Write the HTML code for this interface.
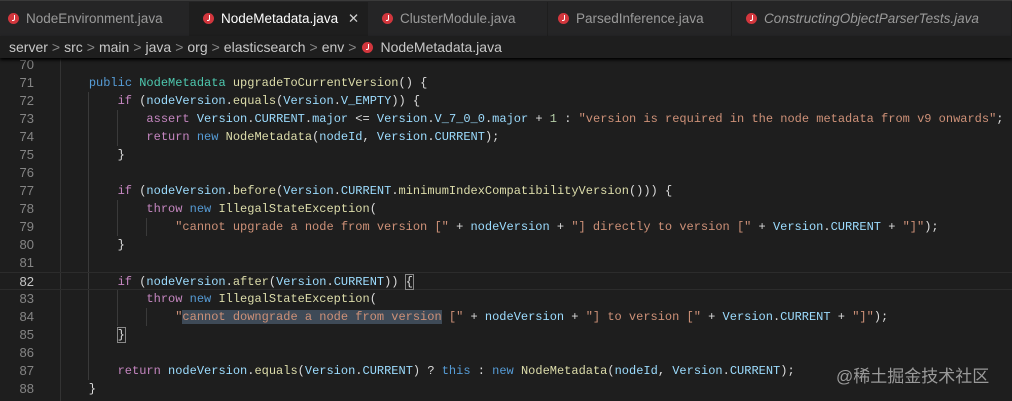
<!DOCTYPE html>
<html><head><meta charset="utf-8"><style>
*{margin:0;padding:0;box-sizing:border-box}
body{width:1012px;height:401px;background:#1e1e1e;overflow:hidden;position:relative;font-family:"Liberation Sans",sans-serif}
.tabs{position:absolute;left:0;top:0;width:1012px;height:36px;background:#252526;border-top:1px solid #3a3a3a}
.tab{position:absolute;top:1px;height:35px;line-height:34px;font-size:13.5px;color:#9a9a9a;white-space:nowrap;border-right:1px solid #1e1e1e}
.tab.act{background:#1e1e1e;color:#fff}
.ic{display:inline-block;width:11px;height:11px;border-radius:50%;background:#d2363d;vertical-align:-1px;margin-right:7px;position:relative}
.ic:after{content:"";position:absolute;left:4px;top:2px;width:2px;height:5px;border-right:1.5px solid #fff;border-bottom:1.5px solid #fff;border-radius:0 0 2px 0}
.crumb{position:absolute;left:0;top:36px;width:1012px;height:22px;background:#1e1e1e;box-shadow:0 2px 3px #000;font-size:14px;color:#c8c8c8;line-height:22px;padding-left:9px;z-index:2}
.crumb .s{color:#888;margin:0 4px}
.code{position:absolute;left:0;top:56px;width:1012px;font-family:"Liberation Mono",monospace;font-size:12px}
.ln{position:relative;height:18px;line-height:18px;white-space:pre}
.n{position:absolute;width:34px;text-align:right;color:#858585;left:0;font-family:"Liberation Sans",sans-serif;font-size:13px}
.t{position:absolute;left:60px;color:#dcdcdc}
.cur .n{color:#c6c6c6}
.cur{border-top:1px solid #2c2c2c;border-bottom:1px solid #2c2c2c}
.k{color:#c586c0}.b{color:#569cd6}.g{color:#4ec9b0}.y{color:#dcdcaa}.v{color:#9cdcfe}.s1{color:#ce9178}.c{color:#9cdcfe}.num{color:#b5cea8}
.gut{position:absolute;left:60px;top:58px;width:1px;height:343px;background:#333}
.guide{position:absolute;width:1px;background:#3a3a3a}
.sel{background:#3e4a57}
.br{outline:1px solid #888}
.wm{position:absolute;left:836px;top:362px;font-size:17px;color:#9a9a9a;font-family:"Liberation Sans","Noto Sans CJK SC",sans-serif}
</style></head><body>
<div class="tabs">
<div class="tab" style="left:0;width:190px;padding-left:8px"><span class="ic"></span>NodeEnvironment.java</div>
<div class="tab act" style="left:190px;width:178px;padding-left:13px"><span class="ic"></span>NodeMetadata.java <span style="color:#ccc;margin-left:6px">✕</span></div>
<div class="tab" style="left:368px;width:180px;padding-left:14px"><span class="ic"></span>ClusterModule.java</div>
<div class="tab" style="left:548px;width:184px;padding-left:10px"><span class="ic"></span>ParsedInference.java</div>
<div class="tab" style="left:732px;width:280px;padding-left:14px;font-style:italic"><span class="ic"></span>ConstructingObjectParserTests.java</div>
</div>
<div class="crumb">server<span class="s">&gt;</span>src<span class="s">&gt;</span>main<span class="s">&gt;</span>java<span class="s">&gt;</span>org<span class="s">&gt;</span>elasticsearch<span class="s">&gt;</span>env<span class="s">&gt;</span><span class="ic" style="margin-left:2px"></span>NodeMetadata.java</div>
<div class="gut"></div>
<div class="guide" style="left:88px;top:92px;height:288px"></div>
<div class="guide" style="left:117px;top:110px;height:36px"></div>
<div class="guide" style="left:117px;top:200px;height:36px"></div>
<div class="guide" style="left:117px;top:290px;height:36px"></div>
<div class="guide" style="left:146px;top:218px;height:18px"></div>
<div class="guide" style="left:146px;top:308px;height:18px"></div>
<div class="code">
<div class="ln"><span class="n">70</span></div>
<div class="ln"><span class="n">71</span><span class="t">    <span class="b">public</span> <span class="g">NodeMetadata</span> <span class="y">upgradeToCurrentVersion</span>() {</span></div>
<div class="ln"><span class="n">72</span><span class="t">        <span class="k">if</span> (<span class="v">nodeVersion</span>.<span class="y">equals</span>(<span class="v">Version</span>.<span class="c">V_EMPTY</span>)) {</span></div>
<div class="ln"><span class="n">73</span><span class="t">            <span class="k">assert</span> <span class="v">Version</span>.<span class="c">CURRENT</span>.<span class="v">major</span> &lt;= <span class="v">Version</span>.<span class="c">V_7_0_0</span>.<span class="v">major</span> + <span class="num">1</span> : <span class="s1">"version is required in the node metadata from v9 onwards"</span>;</span></div>
<div class="ln"><span class="n">74</span><span class="t">            <span class="k">return</span> <span class="b">new</span> <span class="y">NodeMetadata</span>(<span class="v">nodeId</span>, <span class="v">Version</span>.<span class="c">CURRENT</span>);</span></div>
<div class="ln"><span class="n">75</span><span class="t">        }</span></div>
<div class="ln"><span class="n">76</span></div>
<div class="ln"><span class="n">77</span><span class="t">        <span class="k">if</span> (<span class="v">nodeVersion</span>.<span class="y">before</span>(<span class="v">Version</span>.<span class="c">CURRENT</span>.<span class="y">minimumIndexCompatibilityVersion</span>())) {</span></div>
<div class="ln"><span class="n">78</span><span class="t">            <span class="k">throw</span> <span class="b">new</span> <span class="y">IllegalStateException</span>(</span></div>
<div class="ln"><span class="n">79</span><span class="t">                <span class="s1">"cannot upgrade a node from version ["</span> + <span class="v">nodeVersion</span> + <span class="s1">"] directly to version ["</span> + <span class="v">Version</span>.<span class="c">CURRENT</span> + <span class="s1">"]"</span>);</span></div>
<div class="ln"><span class="n">80</span><span class="t">        }</span></div>
<div class="ln"><span class="n">81</span></div>
<div class="ln cur"><span class="n">82</span><span class="t">        <span class="k">if</span> (<span class="v">nodeVersion</span>.<span class="y">after</span>(<span class="v">Version</span>.<span class="c">CURRENT</span>)) <span class="br">{</span></span></div>
<div class="ln"><span class="n">83</span><span class="t">            <span class="k">throw</span> <span class="b">new</span> <span class="y">IllegalStateException</span>(</span></div>
<div class="ln"><span class="n">84</span><span class="t">                <span class="s1">"<span class="sel">cannot downgrade a node from version</span> ["</span> + <span class="v">nodeVersion</span> + <span class="s1">"] to version ["</span> + <span class="v">Version</span>.<span class="c">CURRENT</span> + <span class="s1">"]"</span>);</span></div>
<div class="ln"><span class="n">85</span><span class="t">        <span class="br">}</span></span></div>
<div class="ln"><span class="n">86</span></div>
<div class="ln"><span class="n">87</span><span class="t">        <span class="k">return</span> <span class="v">nodeVersion</span>.<span class="y">equals</span>(<span class="v">Version</span>.<span class="c">CURRENT</span>) ? <span class="b">this</span> : <span class="b">new</span> <span class="y">NodeMetadata</span>(<span class="v">nodeId</span>, <span class="v">Version</span>.<span class="c">CURRENT</span>);</span></div>
<div class="ln"><span class="n">88</span><span class="t">    }</span></div>
</div>
<div class="wm">@稀土掘金技术社区</div>
</body></html>
